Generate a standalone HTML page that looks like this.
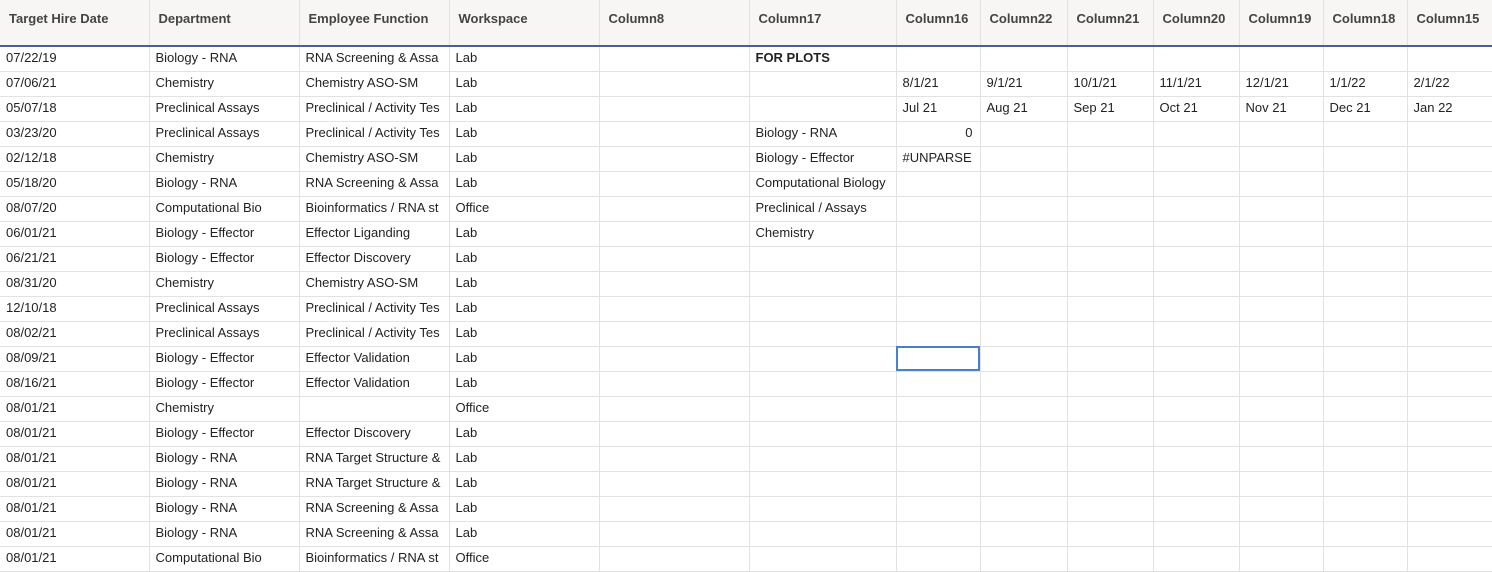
<!DOCTYPE html>
<html><head><meta charset="utf-8"><style>
body{margin:0;width:1492px;height:563px;overflow:hidden;background:#fff;font-family:"Liberation Sans",Arial,sans-serif;}
table{border-collapse:collapse;table-layout:fixed;width:1493px;position:absolute;left:0;top:0}
th{height:46px;background:#f7f6f5;color:#444;font-size:13px;font-weight:bold;text-align:left;vertical-align:top;padding:11px 0 0 9px;border-right:1px solid #e2e2e2;border-bottom:2px solid #4a5f99;box-sizing:border-box;white-space:nowrap;overflow:hidden}
td{height:25px;font-size:13px;color:#222;padding:0 0 3px 6px;border-right:1px solid #e2e2e2;border-bottom:1px solid #e2e2e2;box-sizing:border-box;white-space:nowrap;overflow:hidden}
.r{text-align:right;padding-right:7px}
.b{font-weight:bold}
.sel{position:absolute;left:896px;top:346px;width:84px;height:25px;box-sizing:border-box;border:2px solid #4a7fd0}
</style></head><body>
<table>
<colgroup><col style="width:149px"><col style="width:150px"><col style="width:150px"><col style="width:150px"><col style="width:150px"><col style="width:147px"><col style="width:84px"><col style="width:87px"><col style="width:86px"><col style="width:86px"><col style="width:84px"><col style="width:84px"><col style="width:86px"></colgroup>
<tr><th>Target Hire Date</th><th>Department</th><th>Employee Function</th><th>Workspace</th><th>Column8</th><th>Column17</th><th>Column16</th><th>Column22</th><th>Column21</th><th>Column20</th><th>Column19</th><th>Column18</th><th>Column15</th></tr>
<tr><td>07/22/19</td><td>Biology - RNA</td><td>RNA Screening &amp; Assa</td><td>Lab</td><td></td><td class="b">FOR PLOTS</td><td></td><td></td><td></td><td></td><td></td><td></td><td></td></tr>
<tr><td>07/06/21</td><td>Chemistry</td><td>Chemistry ASO-SM</td><td>Lab</td><td></td><td></td><td>8/1/21</td><td>9/1/21</td><td>10/1/21</td><td>11/1/21</td><td>12/1/21</td><td>1/1/22</td><td>2/1/22</td></tr>
<tr><td>05/07/18</td><td>Preclinical Assays</td><td>Preclinical / Activity Tes</td><td>Lab</td><td></td><td></td><td>Jul 21</td><td>Aug 21</td><td>Sep 21</td><td>Oct 21</td><td>Nov 21</td><td>Dec 21</td><td>Jan 22</td></tr>
<tr><td>03/23/20</td><td>Preclinical Assays</td><td>Preclinical / Activity Tes</td><td>Lab</td><td></td><td>Biology - RNA</td><td class="r">0</td><td></td><td></td><td></td><td></td><td></td><td></td></tr>
<tr><td>02/12/18</td><td>Chemistry</td><td>Chemistry ASO-SM</td><td>Lab</td><td></td><td>Biology - Effector</td><td>#UNPARSE</td><td></td><td></td><td></td><td></td><td></td><td></td></tr>
<tr><td>05/18/20</td><td>Biology - RNA</td><td>RNA Screening &amp; Assa</td><td>Lab</td><td></td><td style="overflow:visible">Computational Biology</td><td></td><td></td><td></td><td></td><td></td><td></td><td></td></tr>
<tr><td>08/07/20</td><td>Computational Bio</td><td>Bioinformatics / RNA st</td><td>Office</td><td></td><td>Preclinical / Assays</td><td></td><td></td><td></td><td></td><td></td><td></td><td></td></tr>
<tr><td>06/01/21</td><td>Biology - Effector</td><td>Effector Liganding</td><td>Lab</td><td></td><td>Chemistry</td><td></td><td></td><td></td><td></td><td></td><td></td><td></td></tr>
<tr><td>06/21/21</td><td>Biology - Effector</td><td>Effector Discovery</td><td>Lab</td><td></td><td></td><td></td><td></td><td></td><td></td><td></td><td></td><td></td></tr>
<tr><td>08/31/20</td><td>Chemistry</td><td>Chemistry ASO-SM</td><td>Lab</td><td></td><td></td><td></td><td></td><td></td><td></td><td></td><td></td><td></td></tr>
<tr><td>12/10/18</td><td>Preclinical Assays</td><td>Preclinical / Activity Tes</td><td>Lab</td><td></td><td></td><td></td><td></td><td></td><td></td><td></td><td></td><td></td></tr>
<tr><td>08/02/21</td><td>Preclinical Assays</td><td>Preclinical / Activity Tes</td><td>Lab</td><td></td><td></td><td></td><td></td><td></td><td></td><td></td><td></td><td></td></tr>
<tr><td>08/09/21</td><td>Biology - Effector</td><td>Effector Validation</td><td>Lab</td><td></td><td></td><td></td><td></td><td></td><td></td><td></td><td></td><td></td></tr>
<tr><td>08/16/21</td><td>Biology - Effector</td><td>Effector Validation</td><td>Lab</td><td></td><td></td><td></td><td></td><td></td><td></td><td></td><td></td><td></td></tr>
<tr><td>08/01/21</td><td>Chemistry</td><td></td><td>Office</td><td></td><td></td><td></td><td></td><td></td><td></td><td></td><td></td><td></td></tr>
<tr><td>08/01/21</td><td>Biology - Effector</td><td>Effector Discovery</td><td>Lab</td><td></td><td></td><td></td><td></td><td></td><td></td><td></td><td></td><td></td></tr>
<tr><td>08/01/21</td><td>Biology - RNA</td><td>RNA Target Structure &amp;</td><td>Lab</td><td></td><td></td><td></td><td></td><td></td><td></td><td></td><td></td><td></td></tr>
<tr><td>08/01/21</td><td>Biology - RNA</td><td>RNA Target Structure &amp;</td><td>Lab</td><td></td><td></td><td></td><td></td><td></td><td></td><td></td><td></td><td></td></tr>
<tr><td>08/01/21</td><td>Biology - RNA</td><td>RNA Screening &amp; Assa</td><td>Lab</td><td></td><td></td><td></td><td></td><td></td><td></td><td></td><td></td><td></td></tr>
<tr><td>08/01/21</td><td>Biology - RNA</td><td>RNA Screening &amp; Assa</td><td>Lab</td><td></td><td></td><td></td><td></td><td></td><td></td><td></td><td></td><td></td></tr>
<tr><td>08/01/21</td><td>Computational Bio</td><td>Bioinformatics / RNA st</td><td>Office</td><td></td><td></td><td></td><td></td><td></td><td></td><td></td><td></td><td></td></tr>
</table>
<div class="sel"></div>
</body></html>
